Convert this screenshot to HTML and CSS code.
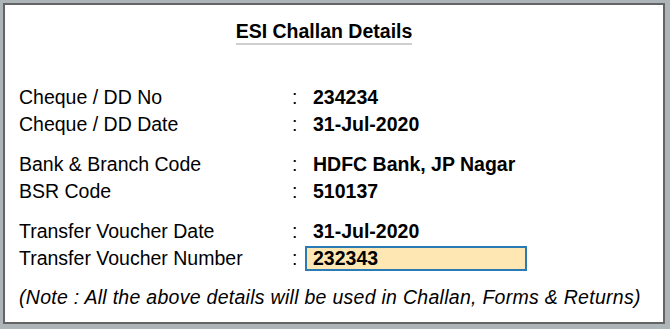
FILE: index.html
```html
<!DOCTYPE html>
<html>
<head>
  <meta charset="UTF-8">
  <title>ESI Challan Details</title>
  <link rel="stylesheet" href="styles.css">
</head>
<body>
  <div class="window">
    <div class="panel">
      <div class="header">
        <h1 class="title">ESI Challan Details</h1>
      </div>

      <div class="group">
        <div class="row">
          <span class="label">Cheque / DD No</span>
          <span class="colon">:</span>
          <span class="value">234234</span>
        </div>
        <div class="row">
          <span class="label">Cheque / DD Date</span>
          <span class="colon">:</span>
          <span class="value">31-Jul-2020</span>
        </div>
      </div>

      <div class="group">
        <div class="row">
          <span class="label">Bank &amp; Branch Code</span>
          <span class="colon">:</span>
          <span class="value">HDFC Bank, JP Nagar</span>
        </div>
        <div class="row">
          <span class="label">BSR Code</span>
          <span class="colon">:</span>
          <span class="value">510137</span>
        </div>
      </div>

      <div class="group">
        <div class="row">
          <span class="label">Transfer Voucher Date</span>
          <span class="colon">:</span>
          <span class="value">31-Jul-2020</span>
        </div>
        <div class="row">
          <span class="label">Transfer Voucher Number</span>
          <span class="colon">:</span>
          <span class="value field">232343</span>
        </div>
      </div>

      <div class="note">(Note : All the above details will be used in Challan, Forms &amp; Returns)</div>
    </div>
  </div>
</body>
</html>
```

FILE: styles.css
```css
:root {
  --frame: #adb5b9;
  --frame-dark: #646464;
  --text: #000000;
  --rule: #cfcfcf;
  --field-bg: #fee7b3;
  --field-border: #2a7ab5;
}

body {
  margin: 0;
  padding: 0;
  font-family: "Liberation Sans", Arial, sans-serif;
  font-size: 19.5px;
  color: var(--text);
  background-color: var(--frame);
}

.window {
  height: 329px;
  box-sizing: border-box;
  padding: 3px 5px 5px 3px;
  background-color: var(--frame);
}

.panel {
  height: 100%;
  box-sizing: border-box;
  background-color: #ffffff;
  border: 2px solid var(--frame-dark);
  padding: 14px 14px 0 14px;
}

.header {
  text-align: center;
  padding-right: 20px;
  margin-bottom: 39px;
}

.title {
  display: inline-block;
  margin: 0;
  font-size: 19.5px;
  font-weight: bold;
  line-height: 24px;
  border-bottom: 2px solid var(--rule);
}

.group {
  margin-bottom: 13px;
}

.row {
  display: flex;
  align-items: center;
  height: 27px;
  line-height: 27px;
}

.label {
  width: 273px;
  flex-shrink: 0;
}

.colon {
  width: 13px;
  flex-shrink: 0;
}

.value {
  font-weight: bold;
  padding-left: 8px;
  white-space: nowrap;
}

.field {
  width: 222px;
  height: 25px;
  box-sizing: border-box;
  line-height: 21px;
  padding-left: 6px;
  background-color: var(--field-bg);
  border: 2px solid var(--field-border);
}

.note {
  font-style: italic;
  line-height: 27px;
  margin-top: -1px;
  letter-spacing: 0.28px;
  white-space: nowrap;
}
```
